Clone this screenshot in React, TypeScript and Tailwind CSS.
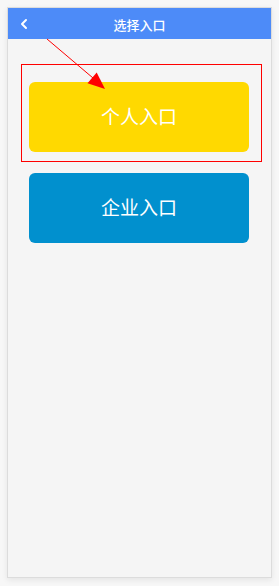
import { ChevronLeft } from "lucide-react";

// entry choice page with the red annotation (box + arrow) on top
export default function App() {
  return (
    <div
      className="relative w-[279px] h-[586px] bg-[#f7f7f7] overflow-hidden"
      style={{ fontFamily: '"Noto Sans CJK SC", "Noto Sans", sans-serif' }}
    >
      <div className="absolute left-[7px] top-[7px] w-[265px] h-[571px] border border-[#dcdcdc] bg-[#f5f5f5] shadow-[0_2px_6px_rgba(0,0,0,0.08)] flex flex-col">
        <header className="h-[31px] bg-[#4d8bf8] flex items-center relative shrink-0">
          <ChevronLeft className="absolute left-[8px] w-[16px] h-[16px] text-white" strokeWidth={3} />
          <div className="flex-1 text-center text-white text-[13px] font-medium leading-none pt-[1px]">选择入口</div>
        </header>
        <main className="flex flex-col px-[21px] pt-[43px] gap-[21px]">
          <button className="w-[220px] h-[70px] rounded-[6px] bg-[#ffd900] text-white text-[19px] leading-none pb-[4px]">
            个人入口
          </button>
          <button className="w-[220px] h-[70px] rounded-[6px] bg-[#0190ce] text-white text-[19px] leading-none pb-[4px]">
            企业入口
          </button>
        </main>
      </div>

      {/* annotation */}
      <div className="absolute left-[21px] top-[64px] w-[241px] h-[98px] border border-[#ff0000] pointer-events-none" />
      <svg className="absolute inset-0 pointer-events-none" width="279" height="586">
        <line x1="47" y1="39" x2="93" y2="78" stroke="#ff0000" strokeWidth="1" />
        <polygon points="105,89 87.5,83.2 96.7,72.6" fill="#ff0000" />
      </svg>
    </div>
  );
}
